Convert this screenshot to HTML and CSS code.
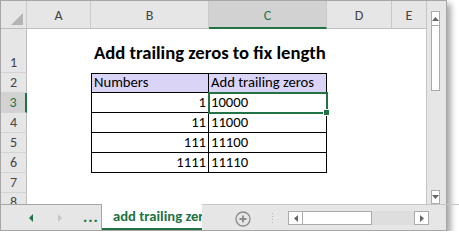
FILE: index.html
```html
<!DOCTYPE html>
<html lang="en">
  <head>
    <meta charset="UTF-8" />
    <title>add trailing zeros</title>
    <link rel="stylesheet" href="styles.css">
  </head>
  <body>
    <div class="window">
      <div class="sheet">
        <div class="corner">
          <svg width="25" height="27" viewBox="0 0 25 27"><polygon points="22,12 22,24 10,24" fill="#b4b4b4" /></svg>
        </div>
        <div class="ch">A</div>
        <div class="ch">B</div>
        <div class="ch sel">C</div>
        <div class="ch">D</div>
        <div class="ch last">E</div>

        <div class="rh">1</div><div></div>
        <div class="title">Add trailing zeros to fix length</div><div></div><div></div><div></div>

        <div class="rh">2</div><div></div>
        <div class="tb hd first">Numbers</div>
        <div class="tb hd">Add trailing zeros</div><div></div><div></div>

        <div class="rh sel">3</div><div></div>
        <div class="tb first num">1</div>
        <div class="tb active">10000</div><div></div><div></div>

        <div class="rh">4</div><div></div>
        <div class="tb first num">11</div>
        <div class="tb">11000</div><div></div><div></div>

        <div class="rh">5</div><div></div>
        <div class="tb first num">111</div>
        <div class="tb">11100</div><div></div><div></div>

        <div class="rh">6</div><div></div>
        <div class="tb first num">1111</div>
        <div class="tb">11110</div><div></div><div></div>

        <div class="rh">7</div><div></div><div></div><div></div><div></div><div></div>
        <div class="rh">8</div><div></div><div></div><div></div><div></div><div></div>
      </div>

      <div class="vscroll">
        <div class="sbtn up"><svg width="7" height="4"><polygon points="0,4 7,4 3.5,0" fill="#666" /></svg></div>
        <div class="vthumb"></div>
        <div class="sbtn down"><svg width="7" height="4"><polygon points="0,0 7,0 3.5,4" fill="#666" /></svg></div>
      </div>

      <div class="tabbar">
        <div class="nav">
          <svg class="arrow" width="5" height="8"><polygon points="4,0 4,8 0,4" fill="#217346" /></svg>
          <svg class="arrow" width="5" height="8"><polygon points="0,0 0,8 4,4" fill="#c6c6c6" /></svg>
          <span class="more">...</span>
        </div>
        <div class="tab">add trailing zeros</div>
        <div class="rest">
          <svg class="add" width="16" height="16" viewBox="0 0 16 16">
            <circle cx="8" cy="8" r="7" fill="none" stroke="#8a8a8a" stroke-width="1.3" />
            <path d="M4.5 8h7M8 4.5v7" stroke="#8a8a8a" stroke-width="1.8" />
          </svg>
          <div class="dots"></div>
          <div class="hscroll">
            <div class="sbtn left"><svg width="4" height="7"><polygon points="4,0 4,7 0,3.5" fill="#666" /></svg></div>
            <div class="hthumb"></div>
            <div class="htrack"></div>
            <div class="sbtn right"><svg width="4" height="7"><polygon points="0,0 0,7 4,3.5" fill="#666" /></svg></div>
          </div>
        </div>
      </div>
    </div>
  </body>
</html>
```

FILE: styles.css
```css
body {
  margin: 0;
  background: #fff;
  font-family: "Carlito", "Lato", "Liberation Sans", sans-serif;
}

.window {
  width: 447px;
  height: 231px;
  box-sizing: border-box;
  border: 1px solid #a6a6a6;
  background: #e6e6e6;
  box-shadow: 4px 4px 6px rgba(0, 0, 0, 0.35);
  display: grid;
  grid-template-columns: 426px 1fr 15px;
  grid-template-rows: 203px 1fr;
  column-gap: 4px;
}

/* grid of cells */
.sheet {
  display: grid;
  grid-template-columns: 26px 64px 118px 118px 65px 34px;
  grid-template-rows: 28px 44px repeat(7, 20px);
  overflow: hidden;
  background: #fff;
  border-right: 1px solid #c6c6c6;
  font-size: 14.67px;
  color: #000;
}

.corner,
.ch {
  background: #e6e6e6;
  border-right: 1px solid #c9c9c9;
  border-bottom: 1px solid #bdbdbd;
  box-sizing: border-box;
}

.ch {
  display: flex;
  align-items: center;
  justify-content: center;
  padding-top: 2px;
  color: #444;
  font-size: 14px;
}

.ch.last {
  border-right: none;
}

.ch.sel {
  background: #d2d2d2;
  color: #217346;
  border-bottom: 2px solid #217346;
}

.rh {
  background: #e6e6e6;
  border-right: 1px solid #bdbdbd;
  border-bottom: 1px solid #d4d4d4;
  box-sizing: border-box;
  display: flex;
  align-items: flex-end;
  justify-content: center;
  line-height: 18px;
  color: #444;
  font-size: 14px;
}

.rh.sel {
  background: #d2d2d2;
  color: #217346;
  border-right: 2px solid #217346;
}

.title {
  align-self: end;
  white-space: nowrap;
  padding: 0 0 9px 3px;
  font-size: 18.67px;
  font-weight: bold;
  line-height: 23px;
}

.tb {
  box-sizing: border-box;
  border-right: 1px solid #000;
  border-bottom: 1px solid #000;
  display: flex;
  align-items: flex-end;
  padding: 0 2px 1px;
  line-height: 18px;
  white-space: nowrap;
}

.tb.first {
  border-left: 1px solid #000;
}

.tb.hd {
  border-top: 1px solid #000;
  background: #dad5f7;
}

.tb.num {
  justify-content: flex-end;
}

.tb.active {
  position: relative;
}

.tb.active::after {
  content: "";
  position: absolute;
  left: -1px;
  top: -1px;
  right: -2px;
  bottom: -2px;
  border: 2px solid #217346;
}

.tb.active::before {
  content: "";
  position: absolute;
  right: -4px;
  bottom: -4px;
  width: 5px;
  height: 5px;
  background: #217346;
  border: 1px solid #fff;
  z-index: 1;
}

/* scrollbars */
.vscroll {
  display: flex;
  flex-direction: column;
  padding-top: 10px;
}

.sbtn {
  box-sizing: border-box;
  border: 1px solid #ababab;
  background: #fff;
  display: flex;
  align-items: center;
  justify-content: center;
}

.up,
.down {
  height: 15px;
}

.down {
  margin-top: auto;
  height: 14px;
}

.vthumb {
  height: 65px;
  box-sizing: border-box;
  border: 1px solid #ababab;
  border-top: none;
  background: #fff;
}

.tabbar {
  grid-column: 1 / 4;
  display: flex;
  font-size: 14.67px;
}

.nav {
  width: 101px;
  box-sizing: border-box;
  border-top: 1px solid #a6a6a6;
  border-right: 1px solid #a6a6a6;
  display: flex;
  align-items: center;
  padding: 0 0 0 28px;
}

.arrow {
  margin-right: 24px;
}

.nav .arrow + .arrow {
  margin-right: 20px;
}

.more {
  color: #217346;
  font-weight: bold;
  font-size: 16px;
  letter-spacing: 1px;
  margin-top: -2px;
}

.tab {
  width: 100px;
  box-sizing: border-box;
  background: #fff;
  border-bottom: 2px solid #217346;
  overflow: hidden;
  white-space: nowrap;
  padding: 3px 0 0 11px;
  color: #217346;
  font-weight: bold;
}

.rest {
  flex: 1;
  border-top: 1px solid #c6c6c6;
  display: flex;
  align-items: flex-start;
}

.add {
  margin: 6px 0 0 33px;
}

.dots {
  width: 1px;
  height: 11px;
  margin: 8px 0 0 21px;
  background: repeating-linear-gradient(#b8b8b8 0 1px, transparent 1px 3px);
}

.hscroll {
  display: flex;
  height: 14px;
  margin: 6px 0 0 15px;
  width: 141px;
}

.left,
.right {
  width: 15px;
}

.hthumb {
  width: 69px;
  box-sizing: border-box;
  border: 1px solid #ababab;
  border-left: none;
  background: #fff;
}

.htrack {
  flex: 1;
  background: #dedede;
}
```
